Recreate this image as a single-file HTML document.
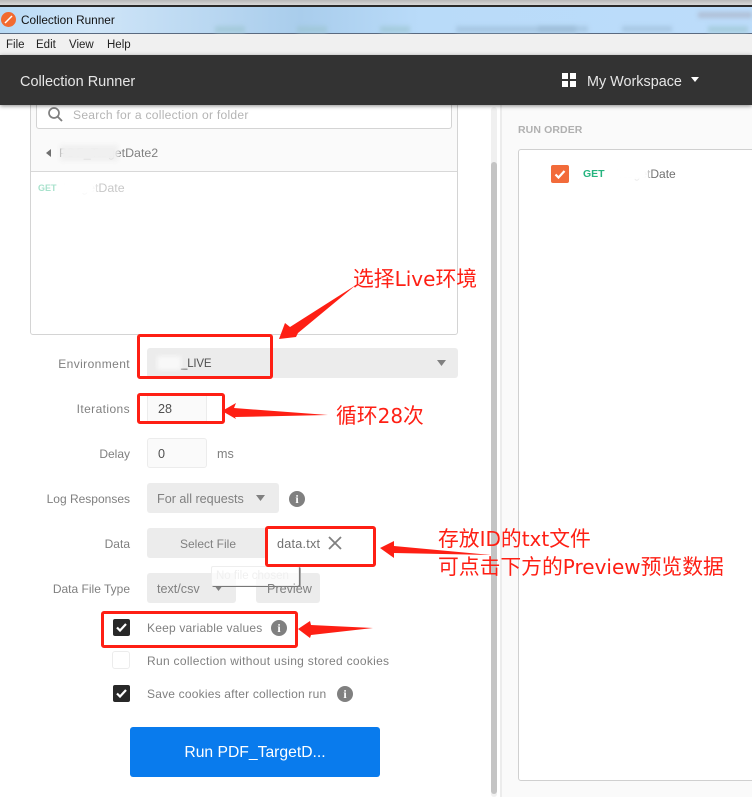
<!DOCTYPE html>
<html><head><meta charset="utf-8"><style>
html,body{margin:0;padding:0;background:#fff}
#p{position:relative;width:752px;height:797px;overflow:hidden;background:#fff;font-family:"Liberation Sans","Noto Sans CJK SC",sans-serif}
#p div{position:absolute;box-sizing:border-box}
.t{white-space:nowrap;line-height:16px;height:16px;font-size:12.6px;color:#808080;letter-spacing:0}
.r{text-align:right;width:130px;left:0;font-size:12px}
.g{background:#ececec;border-radius:3px}
.rb{border:3px solid #fe1f14;border-radius:3px}
.cn{color:#fe1f14;font-family:"DejaVu Sans","Noto Sans CJK SC",sans-serif;font-size:20.8px;line-height:26px;height:26px;white-space:nowrap}
.cn span{font-size:20px}
.info{width:16px;height:16px;border-radius:50%;background:#808080;color:#fff;font:bold 12px/16px "Liberation Serif",serif;text-align:center}
.blur{background:#fff;filter:blur(2px)}
</style></head><body><div id="p">
<div style="left:0;top:0;width:752px;height:5px;background:linear-gradient(#b9b9b9,#d8d8d8)"></div>
<div style="left:0;top:5px;width:752px;height:2px;background:#2a2a2a"></div>
<div style="left:0;top:7px;width:752px;height:27px;background:linear-gradient(90deg,#b8daf5 0,#cfe5f8 90px,#a9cdec 300px,#b9dbf9 420px,#bcdcfa 752px)"></div>
<div style="left:0;top:33px;width:752px;height:1px;background:#5a6a80"></div>
<div style="left:215px;top:26px;width:30px;height:7px;background:#9bc4cf;filter:blur(2px);opacity:.6"></div>
<div style="left:297px;top:26px;width:30px;height:7px;background:#9bc4cf;filter:blur(2px);opacity:.6"></div>
<div style="left:380px;top:26px;width:30px;height:7px;background:#9bc4cf;filter:blur(2px);opacity:.6"></div>
<div style="left:456px;top:26px;width:120px;height:7px;background:#96b6d0;filter:blur(2px);opacity:.5"></div>
<div style="left:538px;top:26px;width:50px;height:6px;background:#96b6d0;filter:blur(2px);opacity:.5"></div>
<div style="left:622px;top:26px;width:50px;height:6px;background:#96b6d0;filter:blur(2px);opacity:.5"></div>
<div style="left:708px;top:26px;width:40px;height:7px;background:#9bc4cf;filter:blur(2px);opacity:.6"></div>
<div style="left:698px;top:12px;width:54px;height:6px;background:#a5a5b5;filter:blur(2px);opacity:.5"></div>
<div style="left:1px;top:12px;width:15px;height:15px;border-radius:50%;background:#f26a30"></div>
<svg style="position:absolute;left:1px;top:12px" width="15" height="15"><path d="M4 11L11 4" stroke="#fff" stroke-width="1.5"/></svg>
<div class="t" style="left:21px;top:12px;font-size:11.8px;color:#111">Collection Runner</div>
<div style="left:0;top:34px;width:752px;height:21px;background:#f0f0f0"></div>
<div class="t" style="left:6px;top:37px;font-size:11.5px;color:#222">File</div>
<div class="t" style="left:36px;top:37px;font-size:11.5px;color:#222">Edit</div>
<div class="t" style="left:69px;top:37px;font-size:11.5px;color:#222">View</div>
<div class="t" style="left:107px;top:37px;font-size:11.5px;color:#222">Help</div>

<!-- Right panel -->
<div style="left:500px;top:105px;width:252px;height:692px;background:#fafafa;border-left:2px solid #ececec"></div>
<div class="t" style="left:518px;top:122px;font-size:10.5px;font-weight:bold;color:#b0b0b0;letter-spacing:.1px">RUN ORDER</div>
<div style="left:518px;top:149px;width:240px;height:632px;background:#fff;border:1px solid #d0d0d0;border-radius:3px"></div>
<div style="left:551px;top:165px;width:18px;height:18px;background:#f26b3a;border-radius:2px"></div>
<svg style="position:absolute;left:551px;top:165px" width="18" height="18"><path d="M4.500 9.500L7.500 12.500L13.500 6" fill="none" stroke="#fff" stroke-width="2.200"/></svg>
<div class="t" style="left:583px;top:166px;font-size:10.5px;font-weight:bold;color:#26b47f">GET</div>
<div class="t" style="left:617px;top:166px;font-size:12px;color:#707070">TargetDate</div>
<div class="blur" style="left:613px;top:164px;width:36px;height:18px"></div>

<!-- Scrollbar -->
<div style="left:491px;top:107px;width:6px;height:690px;background:#f0f0f0;border-radius:3px"></div>
<div style="left:491px;top:162px;width:6px;height:632px;background:#c4c4c4;border-radius:3px"></div>

<!-- Collection box -->
<div style="left:30px;top:100px;width:428px;height:235px;border:1px solid #d4d4d4;border-radius:3px;background:#fff"></div>
<div style="left:31px;top:105px;width:426px;height:67px;background:#fafafa;border-bottom:1px solid #d8d8d8"></div>
<div style="left:36px;top:100px;width:416px;height:29px;background:#fff;border:1px solid #d4d4d4;border-radius:3px"></div>
<svg style="position:absolute;left:47px;top:106px" width="17" height="17"><circle cx="7" cy="7" r="5" fill="none" stroke="#808080" stroke-width="1.700"/><path d="M10.500 10.500L15 15" stroke="#808080" stroke-width="1.900"/></svg>
<div class="t" style="left:73px;top:107px;color:#b4b4b4;font-size:12.1px;letter-spacing:.25px">Search for a collection or folder</div>
<svg style="position:absolute;left:45px;top:148px" width="8" height="10"><path d="M6 1V9L1 5Z" fill="#707070"/></svg>
<div class="t" style="left:59px;top:145px;font-size:12.4px">PDF_TargetDate2</div>
<div class="blur" style="left:60px;top:145px;width:58px;height:16px;background:#f0f0f0"></div>
<div class="t" style="left:38px;top:180px;font-size:9px;font-weight:bold;color:#a8e2cc">GET</div>
<div class="t" style="left:64px;top:180px;color:#c8c8c8;font-size:12.4px">TargetDate</div>
<div class="blur" style="left:61px;top:178px;width:35px;height:18px"></div>

<!-- Form -->
<div class="t r" style="top:356px;letter-spacing:.4px">Environment</div>
<div class="g" style="left:147px;top:348px;width:311px;height:30px"></div>
<div class="t" style="left:181px;top:356px;color:#505050;font-size:11.5px;letter-spacing:-.2px">_LIVE</div>
<div class="blur" style="left:157px;top:356px;width:24px;height:14px;background:#f8f8f8"></div>
<svg style="position:absolute;left:437px;top:360px" width="10" height="7"><path d="M0 0H9L4.500 6Z" fill="#808080"/></svg>

<div class="t r" style="top:401px;letter-spacing:.4px">Iterations</div>
<div style="left:147px;top:393px;width:60px;height:30px;background:#fafafa;border:1px solid #ececec;border-radius:3px"></div>
<div class="t" style="left:158px;top:401px;color:#505050">28</div>

<div class="t r" style="top:446px">Delay</div>
<div style="left:147px;top:438px;width:60px;height:30px;background:#fafafa;border:1px solid #ececec;border-radius:3px"></div>
<div class="t" style="left:158px;top:446px;color:#505050">0</div>
<div class="t" style="left:217px;top:446px">ms</div>

<div class="t r" style="top:491px">Log Responses</div>
<div class="g" style="left:147px;top:483px;width:132px;height:30px"></div>
<div class="t" style="left:157px;top:491px">For all requests</div>
<svg style="position:absolute;left:256px;top:495px" width="10" height="7"><path d="M0 0H9L4.500 6Z" fill="#808080"/></svg>
<div class="info" style="left:289px;top:491px">i</div>

<div class="t r" style="top:536px">Data</div>
<div class="g" style="left:147px;top:528px;width:120px;height:30px"></div>
<div class="t" style="left:180px;top:536px;font-size:12px">Select File</div>
<div class="t" style="left:277px;top:536px;color:#707070;letter-spacing:.25px">data.txt</div>
<svg style="position:absolute;left:328px;top:536px" width="14" height="14"><path d="M1 1L13 13M13 1L1 13" stroke="#808080" stroke-width="1.800"/></svg>

<div class="t r" style="top:581px">Data File Type</div>
<div class="g" style="left:147px;top:573px;width:89px;height:30px"></div>
<div class="t" style="left:157px;top:581px">text/csv</div>
<svg style="position:absolute;left:214px;top:585px" width="10" height="7"><path d="M0 0H9L4.500 6Z" fill="#808080"/></svg>
<div class="g" style="left:256px;top:573px;width:64px;height:30px"></div>
<!-- tooltip ghost -->
<div style="left:211px;top:566px;width:88px;height:20px;background:rgba(255,255,255,.75);border:1px solid #eeeeee;border-radius:2px;box-shadow:1px 1px 0 #777,2px 1px 0 #aaa"></div>
<div class="t" style="left:216px;top:568px;font-size:11.5px;color:#f0f0f0">No file chosen</div>
<div class="t" style="left:267px;top:581px">Preview</div>

<div style="left:113px;top:619px;width:17px;height:17px;background:#282828;border-radius:2px"></div>
<svg style="position:absolute;left:113px;top:619px" width="17" height="17"><path d="M4 8.500L7 11.500L13 5" fill="none" stroke="#fff" stroke-width="2.200"/></svg>
<div class="t" style="left:147px;top:620px;font-size:12px;letter-spacing:.2px">Keep variable values</div>
<div class="info" style="left:271px;top:620px">i</div>

<div style="left:112px;top:651px;width:18px;height:18px;background:#fff;border:1px solid #ececec;border-radius:3px"></div>
<div class="t" style="left:147px;top:653px;font-size:12px;letter-spacing:.3px">Run collection without using stored cookies</div>

<div style="left:113px;top:685px;width:17px;height:17px;background:#282828;border-radius:2px"></div>
<svg style="position:absolute;left:113px;top:685px" width="17" height="17"><path d="M4 8.500L7 11.500L13 5" fill="none" stroke="#fff" stroke-width="2.200"/></svg>
<div class="t" style="left:147px;top:686px;font-size:12px;letter-spacing:.2px">Save cookies after collection run</div>
<div class="info" style="left:337px;top:686px">i</div>

<div style="left:130px;top:727px;width:250px;height:50px;background:#097bed;border-radius:3px;color:#fff;font-size:15.7px;line-height:51px;text-align:center">Run PDF_TargetD...</div>

<!-- Dark header -->
<div style="left:0;top:55px;width:752px;height:50px;background:#333;box-shadow:0 1px 4px rgba(0,0,0,.45)"></div>
<div class="t" style="left:20px;top:74px;font-size:14.5px;color:#e6e6e6">Collection Runner</div>
<div style="left:562px;top:73px;width:6px;height:6px;background:#fff"></div>
<div style="left:570px;top:73px;width:6px;height:6px;background:#fff"></div>
<div style="left:562px;top:81px;width:6px;height:6px;background:#fff"></div>
<div style="left:570px;top:81px;width:6px;height:6px;background:#fff"></div>
<div class="t" style="left:587px;top:74px;font-size:14.4px;color:#e6e6e6">My Workspace</div>
<svg style="position:absolute;left:690px;top:77px" width="10" height="7"><path d="M1 0H9L5 5Z" fill="#fff"/></svg>

<!-- Annotations -->
<div class="rb" style="left:137px;top:334px;width:136px;height:45px"></div>
<div class="rb" style="left:137px;top:393px;width:88px;height:31px"></div>
<div class="rb" style="left:265px;top:526px;width:111px;height:41px"></div>
<div class="rb" style="left:101px;top:611px;width:197px;height:37px"></div>
<svg style="position:absolute;left:0;top:0" width="752" height="797">
<path d="M356 285L298 333L296 337L279 339L285 323L290 327Z" fill="#fe1f14"/>
<path d="M328 415L234 408L236 403L222 411L236 419L235 417Z" fill="#fe1f14"/>
<path d="M491 555L394 546L394 541L380 548L394 558L394 553Z" fill="#fe1f14"/>
<path d="M373 628L311 625L310 621L298 629L310 638L311 635Z" fill="#fe1f14"/>
</svg>
<div class="cn" style="left:353px;top:266px">选择<span>Live</span>环境</div>
<div class="cn" style="left:336px;top:403px">循环<span>28</span>次</div>
<div class="cn" style="left:438px;top:526px">存放<span>ID</span>的<span>txt</span>文件</div>
<div class="cn" style="left:438px;top:554px">可点击下方的<span>Preview</span>预览数据</div>
</div></body></html>
